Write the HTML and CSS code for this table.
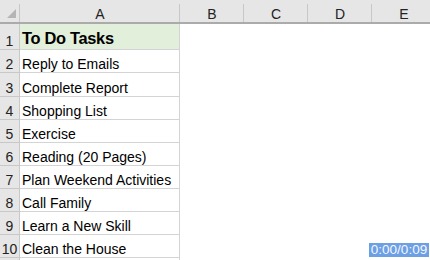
FILE: index.html
```html
<!DOCTYPE html>
<html>
<head>
<meta charset="utf-8">
<link rel="stylesheet" href="styles.css">
</head>
<body>
<div class="sheet">
  <div class="colheads">
    <div class="corner"><svg width="20" height="22" viewBox="0 0 20 22"><polygon points="16,9 16,18 7,18" fill="#b5b5b5"/></svg></div>
    <div class="colhead">A</div>
    <div class="colhead">B</div>
    <div class="colhead">C</div>
    <div class="colhead">D</div>
    <div class="colhead">E</div>
  </div>
  <div class="row r1"><div class="rowhead">1</div><div class="cell title">To Do Tasks</div></div>
  <div class="row"><div class="rowhead">2</div><div class="cell">Reply to Emails</div></div>
  <div class="row tall"><div class="rowhead">3</div><div class="cell">Complete Report</div></div>
  <div class="row"><div class="rowhead">4</div><div class="cell">Shopping List</div></div>
  <div class="row"><div class="rowhead">5</div><div class="cell">Exercise</div></div>
  <div class="row"><div class="rowhead">6</div><div class="cell">Reading (20 Pages)</div></div>
  <div class="row"><div class="rowhead">7</div><div class="cell">Plan Weekend Activities</div></div>
  <div class="row"><div class="rowhead">8</div><div class="cell">Call Family</div></div>
  <div class="row"><div class="rowhead">9</div><div class="cell">Learn a New Skill</div></div>
  <div class="row"><div class="rowhead">10</div><div class="cell">Clean the House</div></div>
  <div class="row"><div class="rowhead"></div><div class="cell"></div></div>
</div>
<div class="timer">0:00/0:09</div>
</body>
</html>
```
FILE: styles.css
```css
html, body {
  margin: 0;
  padding: 0;
  background: #ffffff;
  overflow: hidden;
}
body {
  width: 430px;
  height: 260px;
  font-family: "Liberation Sans", Arial, sans-serif;
  font-size: 14px;
  color: #000;
}
.sheet {
  display: flex;
  flex-direction: column;
}
.colheads {
  display: grid;
  grid-template-columns: 20px 160px 64px 64px 64px 64px;
  height: 24px;
  background: #e6e6e6;
  border-bottom: 2px solid #ababab;
  box-sizing: border-box;
}
.corner {
  background-image: linear-gradient(#c8c8c8, #c8c8c8);
  background-size: 1px calc(100% - 4px);
  background-position: right bottom;
  background-repeat: no-repeat;
  line-height: 0;
}
.colhead {
  display: flex;
  align-items: flex-end;
  justify-content: center;
  line-height: 16px;
  color: #222;
  background-image: linear-gradient(#c8c8c8, #c8c8c8);
  background-size: 1px calc(100% - 4px);
  background-position: right bottom;
  background-repeat: no-repeat;
}
.row {
  display: grid;
  grid-template-columns: 20px 160px;
  height: 23px;
}
.row.r1 { height: 26px; }
.row.tall { height: 24px; }
.rowhead {
  background: #e6e6e6;
  border-right: 1px solid #c8c8c8;
  border-bottom: 1px solid #c8c8c8;
  box-sizing: border-box;
  display: flex;
  align-items: flex-end;
  justify-content: center;
  line-height: 16px;
  color: #222;
}
.cell {
  border-right: 1px solid #d4d4d4;
  border-bottom: 1px solid #d4d4d4;
  box-sizing: border-box;
  display: flex;
  align-items: flex-end;
  padding-left: 2px;
  line-height: 16px;
  white-space: nowrap;
}
.cell.title {
  background: #e2efda;
  font-weight: bold;
  font-size: 16.4px;
  letter-spacing: -0.3px;
  line-height: 18px;
  padding-bottom: 2px;
}
.timer {
  position: absolute;
  right: 1px;
  bottom: 3px;
  width: 60px;
  height: 14px;
  background: #6c9fe3;
  color: #f4f8ff;
  font-size: 13.5px;
  line-height: 14px;
  text-align: center;
}
```
